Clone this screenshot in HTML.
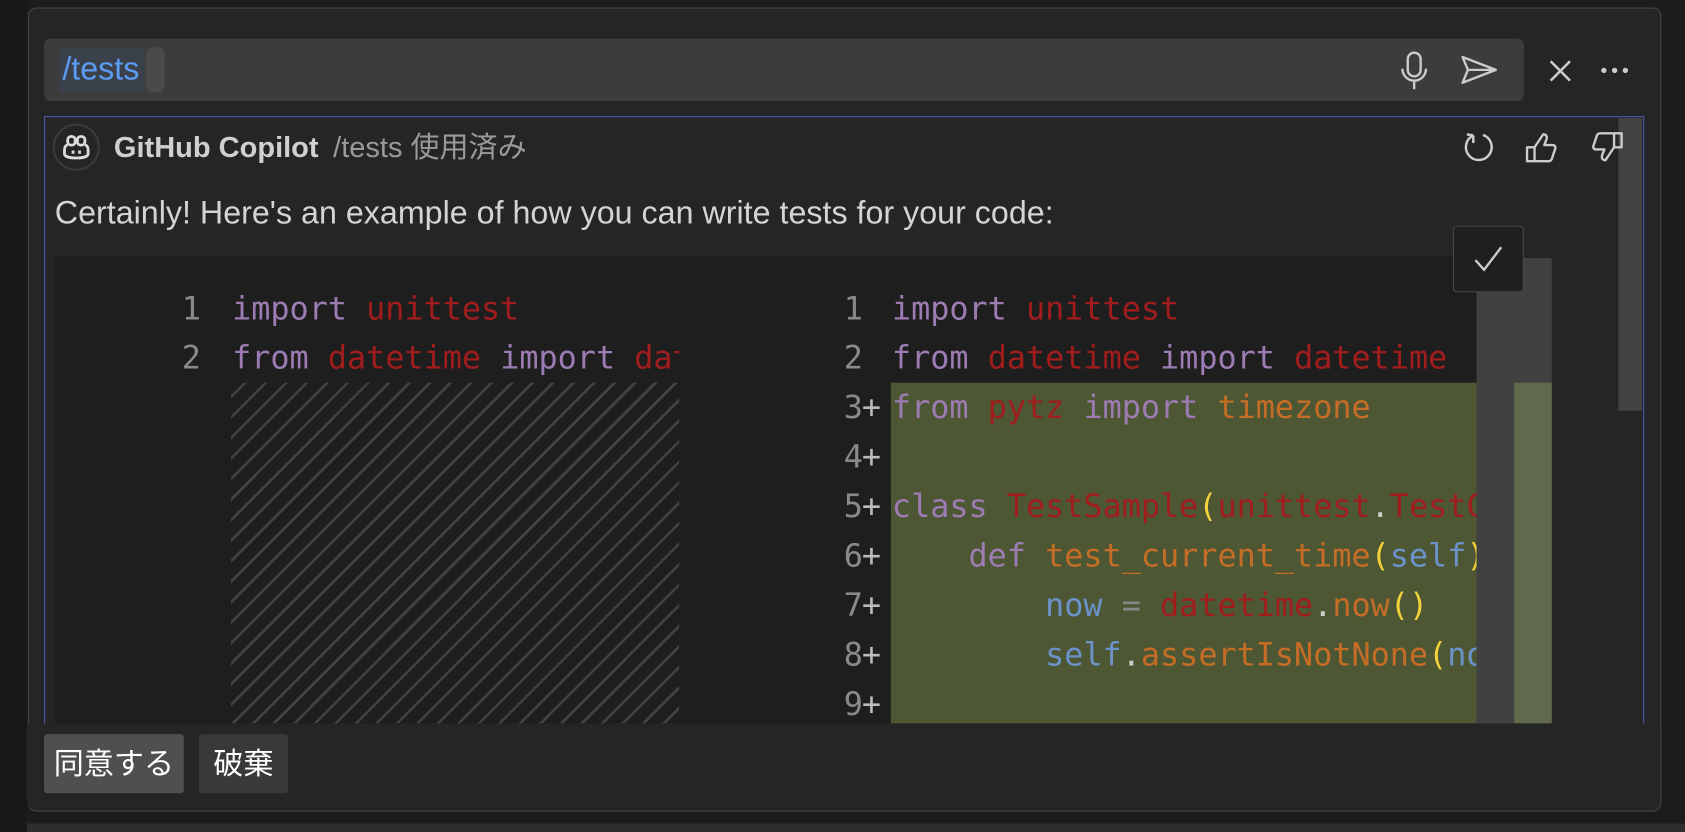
<!DOCTYPE html>
<html><head><meta charset="utf-8"><style>
html,body{margin:0;padding:0;background:#1c1c1c;overflow:hidden;width:1685px;height:832px}
#w{position:absolute;left:0;top:0;width:1568px;height:774px;transform-origin:0 0;transform:scale(1.07462,1.07494);font-family:"Liberation Sans","Noto Sans CJK JP",sans-serif}
.a{position:absolute}
.code{font-family:"DejaVu Sans Mono","Liberation Mono",monospace;font-size:29.6px;white-space:pre;line-height:46px}
.k{color:#9d7cb4}.r{color:#a11d1d}.o{color:#c56d26}.b{color:#6b92c9}.y{color:#f3d23a}.g{color:#888}.w{color:#ccc}
.ln{color:#8a8a8a}
</style></head><body><div id="w">
<div class="a" style="left:0;top:0;width:25px;height:774px;background:#181818"></div>
<div class="a" style="left:26px;top:7px;width:1518px;height:746px;background:#252525;border:1px solid #454545;border-radius:8px"></div>
<div class="a" style="left:25px;top:766px;width:1543px;height:8px;background:#2e2e2e"></div>

<!-- input -->
<div class="a" style="left:41px;top:36px;width:1377px;height:58px;background:#3c3c3c;border-radius:6px"></div>
<div class="a" style="left:55px;top:44px;width:80px;height:42px;background:#3a414b;border-radius:3px"></div>
<div class="a" style="left:136px;top:44px;width:17px;height:42px;background:#4a4a4a;border-radius:6px"></div>
<div class="a" style="left:58px;top:46px;font-size:30px;line-height:38px;color:#5b9cf4">/tests</div>
<svg class="a" style="left:1300px;top:46px" width="32" height="40" viewBox="0 0 32 40" fill="none" stroke="#ccc" stroke-width="2.2"><rect x="10" y="3" width="12" height="22" rx="6"/><path d="M5 18a11 11 0 0 0 22 0M16 29v8"/></svg>
<svg class="a" style="left:1358px;top:50px" width="36" height="30" viewBox="0 0 36 30" fill="none" stroke="#ccc" stroke-width="2.2" stroke-linejoin="round"><path d="M3 3L34 15L3 27L8 15Z M8 15H34"/></svg>
<svg class="a" style="left:1440px;top:54px" width="24" height="24" viewBox="0 0 24 24" stroke="#ccc" stroke-width="2.4"><path d="M3 3L21 21M21 3L3 21"/></svg>
<div class="a" style="left:1490px;top:63px;width:5px;height:5px;border-radius:50%;background:#ccc;box-shadow:10px 0 #ccc,20px 0 #ccc"></div>

<!-- response -->
<div class="a" style="left:41px;top:108px;width:1487px;height:580px;border:1px solid #4b5ab5;border-bottom:none"></div>
<div class="a" style="left:1506px;top:110px;width:22px;height:272px;background:#434343"></div>
<div class="a" style="left:49px;top:115px;width:44px;height:44px;border-radius:50%;border:2px solid #3a3a3a;box-sizing:border-box"></div>
<svg class="a" style="left:57px;top:123px" width="28" height="28" viewBox="0 0 28 28" fill="none" stroke="#ddd" stroke-width="2.6"><path d="M6 12c-2 0-3 2-3 5v3c0 2 3 4 11 4s11-2 11-4v-3c0-3-1-5-3-5"/><rect x="6" y="4" width="7" height="8" rx="3"/><rect x="15" y="4" width="7" height="8" rx="3"/><path d="M11 17v3M17 17v3"/></svg>
<div class="a" style="left:106px;top:119px;font-size:27px;line-height:36px;font-weight:bold;color:#d0d0d0">GitHub Copilot</div>
<div class="a" style="left:310px;top:119px;font-size:27px;line-height:36px;color:#9a9a9a;white-space:nowrap">/tests 使用済み</div>
<svg class="a" style="left:1360px;top:121px" width="32" height="32" viewBox="0 0 32 32" fill="none" stroke="#ccc" stroke-width="2.3"><path d="M11 5A12 12 0 1 0 20 4.5M11 5L11 12M11 5L5 4"/></svg>
<svg class="a" style="left:1418px;top:120px" width="34" height="34" viewBox="0 0 34 34" fill="none" stroke="#ccc" stroke-width="2.2" stroke-linejoin="round"><path d="M3 17h7l8-12c3 0 4 2 3 5l-2 5h8c2 0 3 2 2 4l-3 9c-1 2-2 2-4 2H3Z M10 17v14"/></svg>
<svg class="a" style="left:1478px;top:120px" width="34" height="34" viewBox="0 0 34 34" fill="none" stroke="#ccc" stroke-width="2.2" stroke-linejoin="round"><path d="M31 17h-7l-8 12c-3 0-4-2-3-5l2-5H7c-2 0-3-2-2-4l3-9c1-2 2-2 4-2h19Z M24 17V3"/></svg>
<div class="a" style="left:51px;top:180px;font-size:30px;line-height:38px;color:#d4d4d4;white-space:nowrap">Certainly! Here's an example of how you can write tests for your code:</div>

<!-- code -->
<div class="a" style="left:51px;top:238px;width:1323px;height:435px;background:#1e1e1e;border-radius:4px 0 0 0;overflow:hidden">
  <div class="a" style="left:164px;top:118px;width:417px;height:320px;background:repeating-linear-gradient(-45deg,#1e1e1e 0 11px,#424242 11px 13.5px)"></div>
  <div class="a" style="left:778px;top:118px;width:545px;height:320px;background:#4d5733"></div>
  <div class="a code ln" style="left:110px;top:26px;text-align:right;width:26px">1
2</div>
  <div class="a code" style="left:165px;top:26px;width:416px;overflow:hidden"><span class="k">import</span> <span class="r">unittest</span>
<span class="k">from</span> <span class="r">datetime</span> <span class="k">import</span> <span class="r">datetime</span></div>
  <div class="a code ln" style="left:720px;top:26px;width:32px;text-align:right">1
2
3
4
5
6
7
8
9</div>
  <div class="a code" style="left:751px;top:26px;color:#bbb;font-weight:200">

+
+
+
+
+
+
+</div>
  <div class="a code" style="left:779px;top:26px;width:544px;overflow:hidden"><span class="k">import</span> <span class="r">unittest</span>
<span class="k">from</span> <span class="r">datetime</span> <span class="k">import</span> <span class="r">datetime</span>
<span class="k">from</span> <span class="r">pytz</span> <span class="k">import</span> <span class="o">timezone</span>

<span class="k">class</span> <span class="r">TestSample</span><span class="y">(</span><span class="r">unittest</span><span class="w">.</span><span class="r">TestCase</span><span class="y">)</span>:
    <span class="k">def</span> <span class="o">test_current_time</span><span class="y">(</span><span class="b">self</span><span class="y">)</span>:
        <span class="b">now</span> <span class="g">=</span> <span class="r">datetime</span><span class="w">.</span><span class="o">now</span><span class="y">()</span>
        <span class="b">self</span><span class="w">.</span><span class="o">assertIsNotNone</span><span class="y">(</span><span class="b">now</span><span class="y">)</span>
</div>
</div>
<div class="a" style="left:1374px;top:240px;width:70px;height:433px;background:#414141"></div>
<div class="a" style="left:1409px;top:356px;width:35px;height:317px;background:#5f694b"></div>
<div class="a" style="left:1352px;top:210px;width:66px;height:62px;background:#1f1f1f;border:1px solid #474747;border-radius:4px;box-sizing:border-box"></div>
<svg class="a" style="left:1370px;top:227px" width="30" height="28" viewBox="0 0 30 28" fill="none" stroke="#ccc" stroke-width="2.2"><path d="M3 15L11 24L27 3"/></svg>

<div class="a" style="left:25px;top:673px;width:1520px;height:80px;background:#252525;border-radius:0 0 8px 8px"></div>
<div class="a" style="left:41px;top:683px;width:130px;height:55px;background:#4f4f4f;border-radius:3px;color:#fff;font-size:28px;line-height:55px;text-align:center">同意する</div>
<div class="a" style="left:185px;top:683px;width:83px;height:55px;background:#393939;border-radius:3px;color:#fff;font-size:28px;line-height:55px;text-align:center">破棄</div>
</div></body></html>
